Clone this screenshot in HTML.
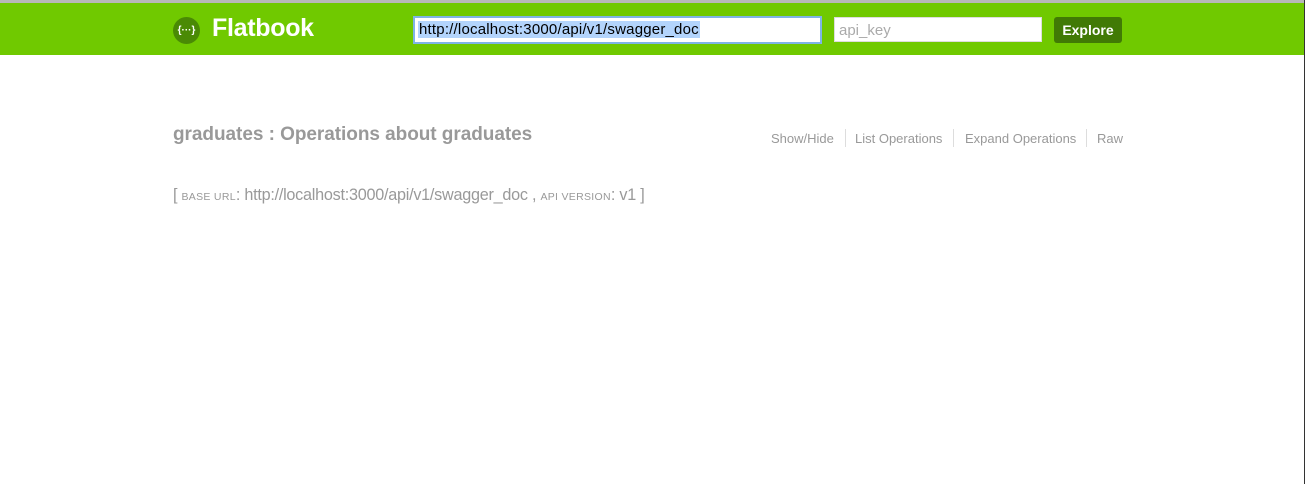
<!DOCTYPE html>
<html><head><style>
body{margin:0;width:1305px;height:484px;background:#fff;font-family:"Liberation Sans",sans-serif;position:relative;overflow:hidden}
.top{position:absolute;left:0;top:0;width:1305px;height:3px;background:#b8b8b8}
.hdr{position:absolute;left:0;top:3px;width:1304px;height:52px;background:#70c900}
.edge{position:absolute;right:0;top:0;width:1px;height:484px;background:#333}
.logo{position:absolute;left:173px;top:17px;width:27px;height:27px;border-radius:50%;background:#4a8a05;color:#fff;font-size:10px;font-weight:bold;text-align:center;line-height:27px}
.title{position:absolute;left:212px;top:14px;color:#fff;font-size:25px;font-weight:bold;letter-spacing:-0.3px}
.in1{position:absolute;left:414px;top:17px;width:405px;height:24px;border:2px solid #7fb4e6;background:#fff;box-sizing:content-box;margin:-1px}
.in1 span{position:absolute;left:3px;top:3px;font-size:15px;background:#b3d4fc;color:#000;padding:0 1px;letter-spacing:0.2px}
.in2{position:absolute;left:834px;top:17px;width:208px;height:25px;border:1px solid #ddd;background:#fff;font-size:15px;color:#aaa;line-height:25px;padding-left:4px;box-sizing:border-box}
.btn{position:absolute;left:1054px;top:17px;width:68px;height:26px;background:#417a05;border-radius:3px;color:#fff;font-weight:bold;font-size:14px;text-align:center;line-height:26px}
.h{position:absolute;left:173px;top:124px;color:#999;font-size:19px;font-weight:bold;letter-spacing:-0.05px}
.nav{position:absolute;top:131px;color:#999;font-size:13px}
.sep{position:absolute;top:129px;width:1px;height:18px;background:#ddd}
.base{position:absolute;left:173px;top:186px;color:#999;font-size:16.2px;letter-spacing:-0.25px}
.sc{font-size:10.5px;letter-spacing:.3px}
</style></head><body>
<div class="top"></div><div class="hdr"></div><div class="edge"></div>
<div class="logo">{···}</div>
<div class="title">Flatbook</div>
<div class="in1"><span>http://localhost:3000/api/v1/swagger_doc</span></div>
<div class="in2">api_key</div>
<div class="btn">Explore</div>
<div class="h">graduates : Operations about graduates</div>
<div class="nav" style="left:771px">Show/Hide</div>
<div class="sep" style="left:845px"></div>
<div class="nav" style="left:855px">List Operations</div>
<div class="sep" style="left:953px"></div>
<div class="nav" style="left:965px">Expand Operations</div>
<div class="sep" style="left:1086px"></div>
<div class="nav" style="left:1097px">Raw</div>
<div class="base">[ <span class="sc">BASE URL</span>: http://localhost:3000/api/v1/swagger_doc , <span class="sc">API VERSION</span>: v1 ]</div>
</body></html>
